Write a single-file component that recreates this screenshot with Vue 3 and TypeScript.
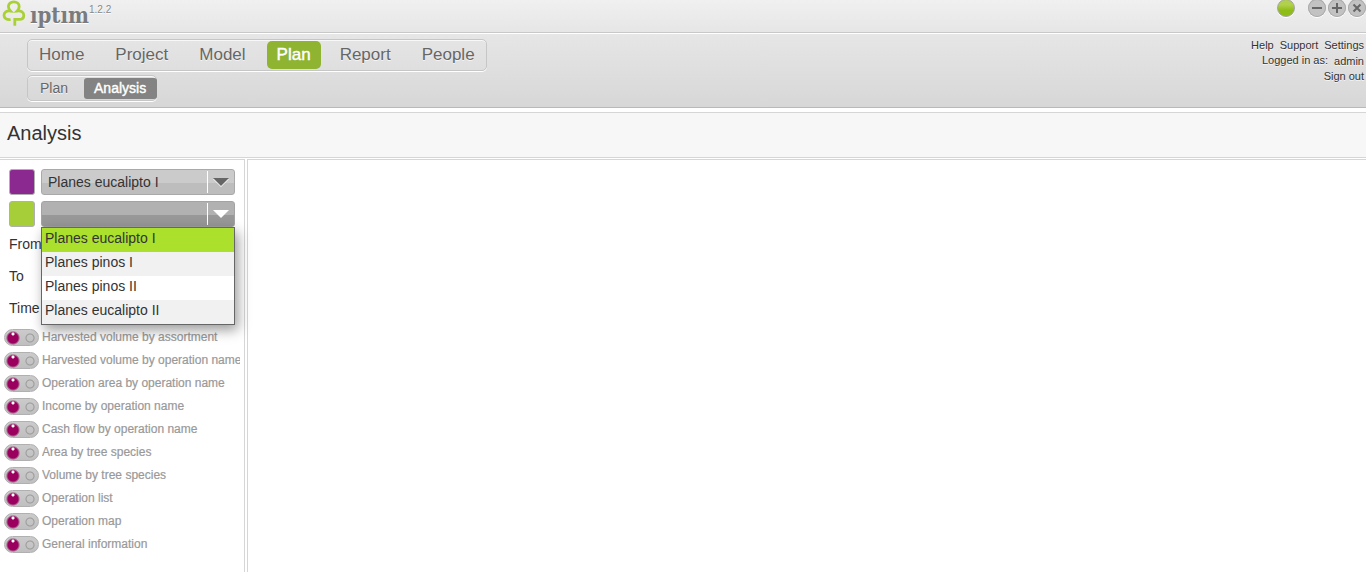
<script setup lang="ts">
import { ref } from 'vue'

const mainTabs = ['Home', 'Project', 'Model', 'Plan', 'Report', 'People']
const subTabs = ['Plan', 'Analysis']
const activeMain = ref('Plan')
const activeSub = ref('Analysis')
const plans = ['Planes eucalipto I', 'Planes pinos I', 'Planes pinos II', 'Planes eucalipto II']
const firstPlan = ref(plans[0])
const secondPlan = ref('')
const open = ref(true)
const highlighted = ref(0)
const periods = ['From', 'To', 'Time']
const charts = [
  'Harvested volume by assortment',
  'Harvested volume by operation name',
  'Operation area by operation name',
  'Income by operation name',
  'Cash flow by operation name',
  'Area by tree species',
  'Volume by tree species',
  'Operation list',
  'Operation map',
  'General information',
]

function choose(plan: string) {
  secondPlan.value = plan
  open.value = false
}
</script>

<template>
  <div class="app">
    <header class="top">
      <div class="brand">
        <svg class="logo" width="24" height="28" viewBox="0 0 24 28" aria-hidden="true">
          <path
            d="M8.6 20.6 C4.4 21 2 19.2 2 16.2 C2 13.2 4.4 11.6 8.4 12 C6.6 10.2 6.4 8.6 6.4 7.6 C6.4 4.6 8.8 2.8 11.8 2.8 C14.8 2.8 17.2 4.6 17.2 7.6 C17.2 8.6 17 10.2 15.2 12 C19.4 11.6 21.8 13.2 21.8 16.2 C21.8 19 20 20.4 17.4 20.4 H12.8 V26.8"
            fill="none" stroke="#a9d135" stroke-width="2.8" />
        </svg>
        <span class="name">ıptım</span>
        <span class="version">1.2.2</span>
      </div>
      <div class="window">
        <span class="status"></span>
        <button type="button" aria-label="Minimize">
          <svg width="18" height="18" viewBox="0 0 18 18"><path d="M4 9H14" /></svg>
        </button>
        <button type="button" aria-label="Maximize">
          <svg width="18" height="18" viewBox="0 0 18 18"><path d="M4 9H14M9 4V14" /></svg>
        </button>
        <button type="button" aria-label="Close">
          <svg width="18" height="18" viewBox="0 0 18 18"><path d="M5.5 5.5L12.5 12.5M12.5 5.5L5.5 12.5" /></svg>
        </button>
      </div>
    </header>

    <div class="menu">
      <div class="navs">
        <nav class="tabs">
          <button v-for="t in mainTabs" :key="t" type="button" :class="{ on: t === activeMain }" @click="activeMain = t">{{ t }}</button>
        </nav>
        <nav class="tabs sub">
          <button v-for="t in subTabs" :key="t" type="button" :class="{ on: t === activeSub }" @click="activeSub = t">{{ t }}</button>
        </nav>
      </div>
      <div class="account">
        <div class="links"><a href="#">Help</a><a href="#">Support</a><a href="#">Settings</a></div>
        <div class="user"><span>Logged in as:</span><a href="#">admin</a></div>
        <div><a href="#">Sign out</a></div>
      </div>
    </div>

    <div class="title"><h1>Analysis</h1></div>

    <div class="body">
      <aside class="side">
        <div class="pick">
          <span class="swatch purple"></span>
          <div class="combo">
            <select v-model="firstPlan" aria-label="First plan">
              <option v-for="p in plans" :key="p">{{ p }}</option>
            </select>
            <svg class="arrow" width="16" height="9" viewBox="0 0 16 9"><path d="M0 1H16L8 9Z" fill="#fff" /><path d="M0 0H16L8 8Z" fill="#666" /></svg>
          </div>
        </div>
        <div class="pick">
          <span class="swatch green"></span>
          <div class="combo dark">
            <button type="button" class="trigger" aria-label="Second plan" aria-haspopup="listbox" :aria-expanded="open" @click="open = !open">{{ secondPlan }}</button>
            <svg class="arrow" width="16" height="9" viewBox="0 0 16 9"><path d="M0 0H16L8 8Z" fill="#fff" /></svg>
            <ul v-if="open" class="list" role="listbox" aria-label="Plans">
              <li v-for="(p, i) in plans" :key="p" role="option" :aria-selected="i === highlighted" :class="{ hot: i === highlighted }" @mouseenter="highlighted = i" @click="choose(p)">{{ p }}</li>
            </ul>
          </div>
        </div>
        <div v-for="p in periods" :key="p" class="period">{{ p }}</div>
        <div class="switches">
          <label v-for="c in charts" :key="c" class="row">
            <input type="checkbox" />
            <span>{{ c }}</span>
          </label>
        </div>
      </aside>
      <main class="canvas"></main>
    </div>
  </div>
</template>

<style>
body {
  background: #fff;
}
</style>

<style scoped>
.app {
  display: flex;
  flex-direction: column;
  min-height: 100vh;
  overflow: hidden;
  color: #333;
  font-family: "Liberation Sans", Arial, sans-serif;
  font-size: 14px;
}
.app * {
  box-sizing: border-box;
}
button,
select {
  font: inherit;
  color: inherit;
  border: 0;
  margin: 0;
}
a {
  color: inherit;
  text-decoration: none;
}
.top {
  display: flex;
  justify-content: space-between;
  height: 33px;
  background: linear-gradient(#f0f0f0, #e6e6e6);
  border-bottom: 1px solid #c8c8c8;
}
.brand {
  display: flex;
  padding-left: 2px;
}
.name {
  margin-left: 4px;
  font: bold 22px/30px "DejaVu Serif Condensed", "DejaVu Serif", serif;
  color: #7a7b7e;
  text-shadow: 0 1px 0 #fff;
}
.version {
  font-size: 10px;
  line-height: 19px;
  color: #888;
  text-shadow: 0 1px 0 #fff;
}
.window {
  display: flex;
  gap: 2px;
}
.status {
  width: 18px;
  height: 18px;
  margin-right: 11px;
  border: 1px solid #a3a3a3;
  border-radius: 50%;
  background: linear-gradient(#b1d04c 30%, #8fbd18 65%);
  box-shadow: 0 1px 0 #fff;
}
.window button {
  width: 18px;
  height: 18px;
  padding: 0;
  border-radius: 50%;
  background: #c2c2c2;
  box-shadow: inset 0 0 0 1px #aaa, 0 1px 0 #fff;
}
.window svg {
  display: block;
  fill: none;
  stroke: #666;
  stroke-width: 2;
}
.window,
.logo {
  margin-top: -1px;
}
.menu {
  display: flex;
  justify-content: space-between;
  height: 75px;
  padding: 5px 2px 0 27px;
  border-top: 1px solid #fff;
  border-bottom: 1px solid #b9b9b9;
  background: linear-gradient(#e6e6e6, #d7d7d7);
}
.navs {
  display: flex;
  flex-direction: column;
  align-items: flex-start;
  gap: 4px;
}
.tabs {
  display: flex;
  align-items: center;
  height: 32px;
  border: 1px solid #c6c6c6;
  border-radius: 5px;
  box-shadow: inset 0 1px 0 #f8f8f8, 0 1px 0 #fff;
}
.tabs button {
  height: 28px;
  padding: 0 10px;
  margin-right: 11px;
  border-radius: 5px;
  background: none;
  font-size: 17px;
  line-height: 26px;
  color: #666;
  text-shadow: 0 1px 0 #f5f5f5;
}
.tabs button:first-child {
  padding-left: 11px;
}
.tabs .on {
  margin-right: 9px;
  background: #8fb431;
  color: #fff;
  text-shadow: none;
  -webkit-text-stroke: 0.4px #fff;
}
.tabs button:last-child {
  margin-right: 1px;
}
.tabs.sub {
  height: 26px;
}
.tabs.sub button {
  height: 21px;
  margin-right: 6px;
  border-radius: 3px;
  font-size: 14px;
  line-height: 18px;
}
.tabs.sub button:first-child {
  padding-left: 12px;
}
.tabs.sub .on {
  padding-right: 11px;
  margin-right: -1px;
  background: #838383;
}
.account {
  font-size: 11px;
  line-height: 15px;
  text-align: right;
  text-shadow: 0 1px 0 #f5f5f5;
}
.links,
.user {
  display: flex;
  justify-content: flex-end;
  gap: 6px;
}
.links {
  height: 14px;
  line-height: 12px;
}
.user {
  height: 16px;
}
.user a {
  line-height: 17px;
}
.title {
  height: 46px;
  margin-top: 4px;
  padding-left: 7px;
  border-top: 1px solid #d6d6d6;
  border-bottom: 1px solid #d6d6d6;
  background: #f7f7f7;
}
h1 {
  margin: 0;
  font-size: 20px;
  font-weight: normal;
  line-height: 40px;
}
.body {
  display: flex;
  flex: 1;
  gap: 2px;
  margin-top: 1px;
}
.side {
  width: 245px;
  padding: 9px 4px 0;
  border-top: 1px solid #d6d6d6;
  border-right: 1px solid #d6d6d6;
}
.canvas {
  flex: 1;
  border-top: 1px solid #d6d6d6;
  border-left: 1px solid #d6d6d6;
}
.pick {
  display: flex;
  gap: 6px;
  padding: 0 5px;
  margin-bottom: 6px;
}
.swatch {
  width: 26px;
  height: 26px;
  border: 1px solid #b0b0b0;
  border-radius: 3px;
}
.purple {
  background: #8b2990;
}
.green {
  background: #a6ce39;
}
.combo {
  position: relative;
  flex: 1;
  height: 26px;
  border: 1px solid #a9a9a9;
  border-radius: 3px;
  background: linear-gradient(#cbcbcb 55%, #bdbdbd 55%);
}
.combo.dark {
  border-color: #a3a3a3;
  background: linear-gradient(#b1b1b1 55%, #989898 55%);
}
.combo::after {
  content: "";
  position: absolute;
  top: 1px;
  right: 26px;
  bottom: 1px;
  width: 1px;
  background: #fff;
}
.combo select,
.trigger {
  display: block;
  width: 100%;
  height: 24px;
  padding: 0 30px 0 6px;
  appearance: none;
  background: none;
  text-align: left;
}
.arrow {
  position: absolute;
  top: 8px;
  right: 5px;
  pointer-events: none;
}
.list {
  position: absolute;
  z-index: 2;
  top: 25px;
  left: -1px;
  right: -1px;
  margin: 0;
  padding: 0;
  border: 1px solid #666;
  background: #fff;
  box-shadow: 3px 5px 12px rgba(0, 0, 0, 0.4);
  list-style: none;
}
.list li {
  height: 24px;
  padding-left: 3px;
  line-height: 20px;
}
.list li:nth-child(even) {
  background: #f1f1f1;
}
.list .hot {
  background: #abe02d;
}
.period {
  height: 32px;
  padding-left: 5px;
  line-height: 22px;
}
.switches {
  display: flex;
  flex-direction: column;
  margin-top: -3px;
}
.row {
  display: flex;
  align-items: flex-start;
  gap: 3px;
  height: 23px;
  padding-top: 3px;
  font-size: 12px;
  color: #999;
}
.row span {
  flex: 1;
  min-width: 0;
  overflow: hidden;
  line-height: 17px;
  white-space: nowrap;
  -webkit-text-stroke: 0.2px #999;
}
.row input {
  flex: none;
  width: 35px;
  height: 17px;
  margin: 0;
  appearance: none;
  border: 1px solid #b0b0b0;
  border-radius: 9px;
  background:
    radial-gradient(circle at 8px 4px, #fff 1px, transparent 2px),
    radial-gradient(circle at 8px 8px, #9b005f 5px, #bbb 7px, transparent 7px),
    radial-gradient(circle at 25px 8px, transparent 3px, #999 4px, transparent 5px),
    linear-gradient(#cbcbcb, #bfbfbf);
}
</style>
